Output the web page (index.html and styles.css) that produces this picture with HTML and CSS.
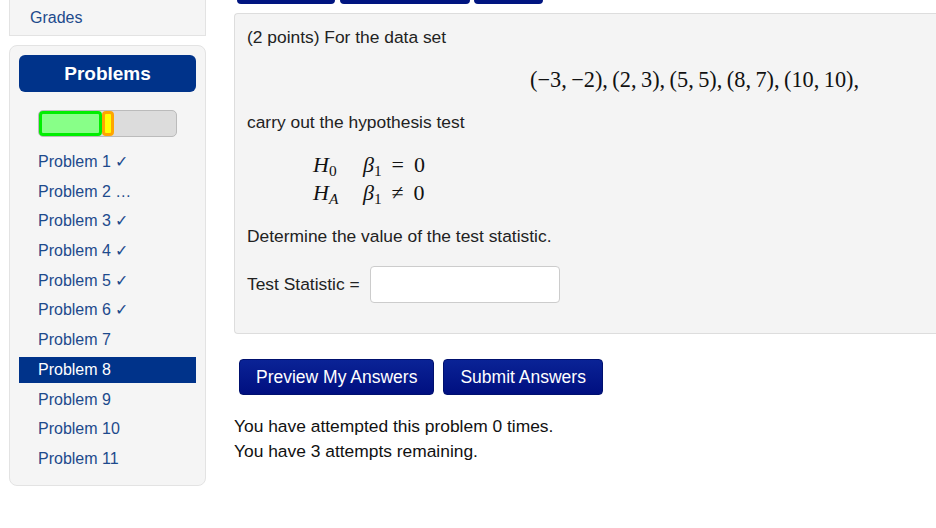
FILE: index.html
```html
<!DOCTYPE html>
<html lang="en">
<head>
    <meta charset="UTF-8">
    <meta name="viewport" content="width=device-width, initial-scale=1.0">
    <title>Problem 8</title>
    <link rel="stylesheet" href="styles.css">
</head>
<body>
    <div class="page">
        <aside class="sidebar">
            <div class="grades"><a href="#">Grades</a></div>
            <div class="problems-box">
                <div class="problems-title">Problems</div>
                <div class="progress">
                    <span class="seg correct"></span>
                    <span class="seg partial"></span>
                </div>
                <ul class="problem-list">
                    <li><a href="#">Problem 1 &#10003;</a></li>
                    <li><a href="#">Problem 2 &hellip;</a></li>
                    <li><a href="#">Problem 3 &#10003;</a></li>
                    <li><a href="#">Problem 4 &#10003;</a></li>
                    <li><a href="#">Problem 5 &#10003;</a></li>
                    <li><a href="#">Problem 6 &#10003;</a></li>
                    <li><a href="#">Problem 7</a></li>
                    <li class="active"><a href="#">Problem 8</a></li>
                    <li><a href="#">Problem 9</a></li>
                    <li><a href="#">Problem 10</a></li>
                    <li><a href="#">Problem 11</a></li>
                </ul>
            </div>
        </aside>

        <main class="main">
            <div class="top-nav">
                <span class="nav-btn nav-a"></span>
                <span class="nav-btn nav-b"></span>
                <span class="nav-btn nav-c"></span>
            </div>

            <div class="problem">
                <p class="line">(2 points) For the data set</p>
                <div class="math-display">(&minus;3,&thinsp;&minus;2),&thinsp;(2,&thinsp;3),&thinsp;(5,&thinsp;5),&thinsp;(8,&thinsp;7),&thinsp;(10,&thinsp;10),</div>
                <p class="line gap">carry out the hypothesis test</p>
                <div class="hyp">
                    <span class="math"><i>H</i><sub>0</sub></span>
                    <span class="math"><i>&beta;</i><sub>1</sub><span class="rel">=</span>0</span>
                    <span class="math"><i>H</i><sub><i>A</i></sub></span>
                    <span class="math"><i>&beta;</i><sub>1</sub><span class="rel">&ne;</span>0</span>
                </div>
                <p class="line gap">Determine the value of the test statistic.</p>
                <div class="answer-row">
                    <label for="ans">Test Statistic =</label>
                    <input type="text" id="ans" class="answer">
                </div>
            </div>

            <div class="actions">
                <button class="btn">Preview My Answers</button>
                <button class="btn">Submit Answers</button>
            </div>

            <div class="attempts">
                <p>You have attempted this problem 0 times.</p>
                <p>You have 3 attempts remaining.</p>
            </div>
        </main>
    </div>
</body>
</html>
```

FILE: styles.css
```css
body {
    margin: 0;
    font-family: "Liberation Sans", Arial, sans-serif;
    background-color: #ffffff;
    color: #222;
    overflow: hidden;
}
a {
    color: #1d4a8c;
    text-decoration: none;
}
.page {
    display: flex;
    gap: 28px;
    padding-left: 9px;
}

/* sidebar */
.sidebar {
    width: 197px;
    flex-shrink: 0;
    display: flex;
    flex-direction: column;
    gap: 9px;
}
.grades {
    height: 36px;
    box-sizing: border-box;
    background-color: #f5f5f5;
    border: 1px solid #e3e3e3;
    border-top: none;
    padding-left: 20px;
    line-height: 35px;
    font-size: 16px;
}
.problems-box {
    background-color: #f5f5f5;
    border: 1px solid #e3e3e3;
    border-radius: 8px;
    padding: 9px 9px 13px;
}
.problems-title {
    background-color: #00338a;
    color: #fff;
    font-weight: bold;
    font-size: 19px;
    text-align: center;
    height: 37px;
    line-height: 37px;
    border-radius: 6px;
}
.progress {
    display: flex;
    box-sizing: border-box;
    width: 139px;
    height: 27px;
    margin: 18px 0 0 19px;
    background-color: #dcdcdc;
    border: 1px solid #bbb;
    border-radius: 5px;
}
.seg {
    box-sizing: border-box;
    height: 100%;
    border-radius: 4px;
}
.correct {
    width: 63px;
    background-color: #88ff88;
    border: 3px solid #00ee00;
}
.partial {
    width: 12px;
    background-color: #ffff00;
    border: 3px solid #ffa500;
}
.problem-list {
    list-style: none;
    margin: 12px 0 0;
    padding: 0;
    display: flex;
    flex-direction: column;
    gap: 3.7px;
}
.problem-list li {
    height: 26px;
    line-height: 26px;
    padding-left: 19px;
    font-size: 16px;
}
.problem-list li.active {
    background-color: #00338a;
}
.problem-list li.active a {
    color: #fff;
}

/* main column, cut off by the window on the right */
.main {
    flex: 1;
    min-width: 0;
    font-size: 17.4px;
}
.top-nav {
    display: flex;
    height: 4px;
    padding-left: 3px;
}
.nav-btn {
    height: 4px;
    background-color: #001580;
    border-radius: 0 0 4px 4px;
}
.nav-a { width: 98px; margin-right: 5px; }
.nav-b { width: 130px; margin-right: 4px; }
.nav-c { width: 69px; }

.problem {
    margin-top: 9px;
    background-color: #f4f4f4;
    border: 1px solid #ddd;
    border-right: none;
    border-radius: 4px 0 0 4px;
    padding: 10.5px 0 30px 12px;
}
.line {
    margin: 0;
    line-height: 25px;
}
.line.gap {
    margin-top: 16.5px;
}
.math-display {
    margin-top: 17.5px;
    height: 26px;
    line-height: 26px;
    padding-left: 283px;
    font-family: "Liberation Serif", "Times New Roman", serif;
    font-size: 22.3px;
    color: #111;
    white-space: nowrap;
}
.hyp {
    display: grid;
    grid-template-columns: 50px auto;
    margin: 16.5px 0 0 66px;
    font-family: "Liberation Serif", "Times New Roman", serif;
    font-size: 22px;
    color: #111;
}
.hyp .math {
    height: 28px;
    line-height: 28px;
}
.math sub {
    font-size: 0.7em;
    vertical-align: -0.25em;
    line-height: 0;
}
.rel {
    margin: 0 0.45em;
}
.answer-row {
    display: flex;
    align-items: center;
    gap: 10px;
    margin-top: 17.5px;
}
.answer {
    box-sizing: border-box;
    width: 190px;
    height: 37px;
    border: 1px solid #ccc;
    border-radius: 4px;
    background-color: #fff;
}

.actions {
    display: flex;
    gap: 9px;
    margin-top: 25px;
    padding-left: 5px;
}
.btn {
    height: 36px;
    padding: 0 16px;
    font-family: "Liberation Sans", Arial, sans-serif;
    font-size: 17.5px;
    color: #fff;
    background: linear-gradient(to bottom, #0a2396, #000f80);
    border: 1px solid #00106e;
    border-radius: 4px;
    cursor: pointer;
}
.attempts {
    margin-top: 18.5px;
    color: #111;
}
.attempts p {
    margin: 0;
    line-height: 25px;
}
```
